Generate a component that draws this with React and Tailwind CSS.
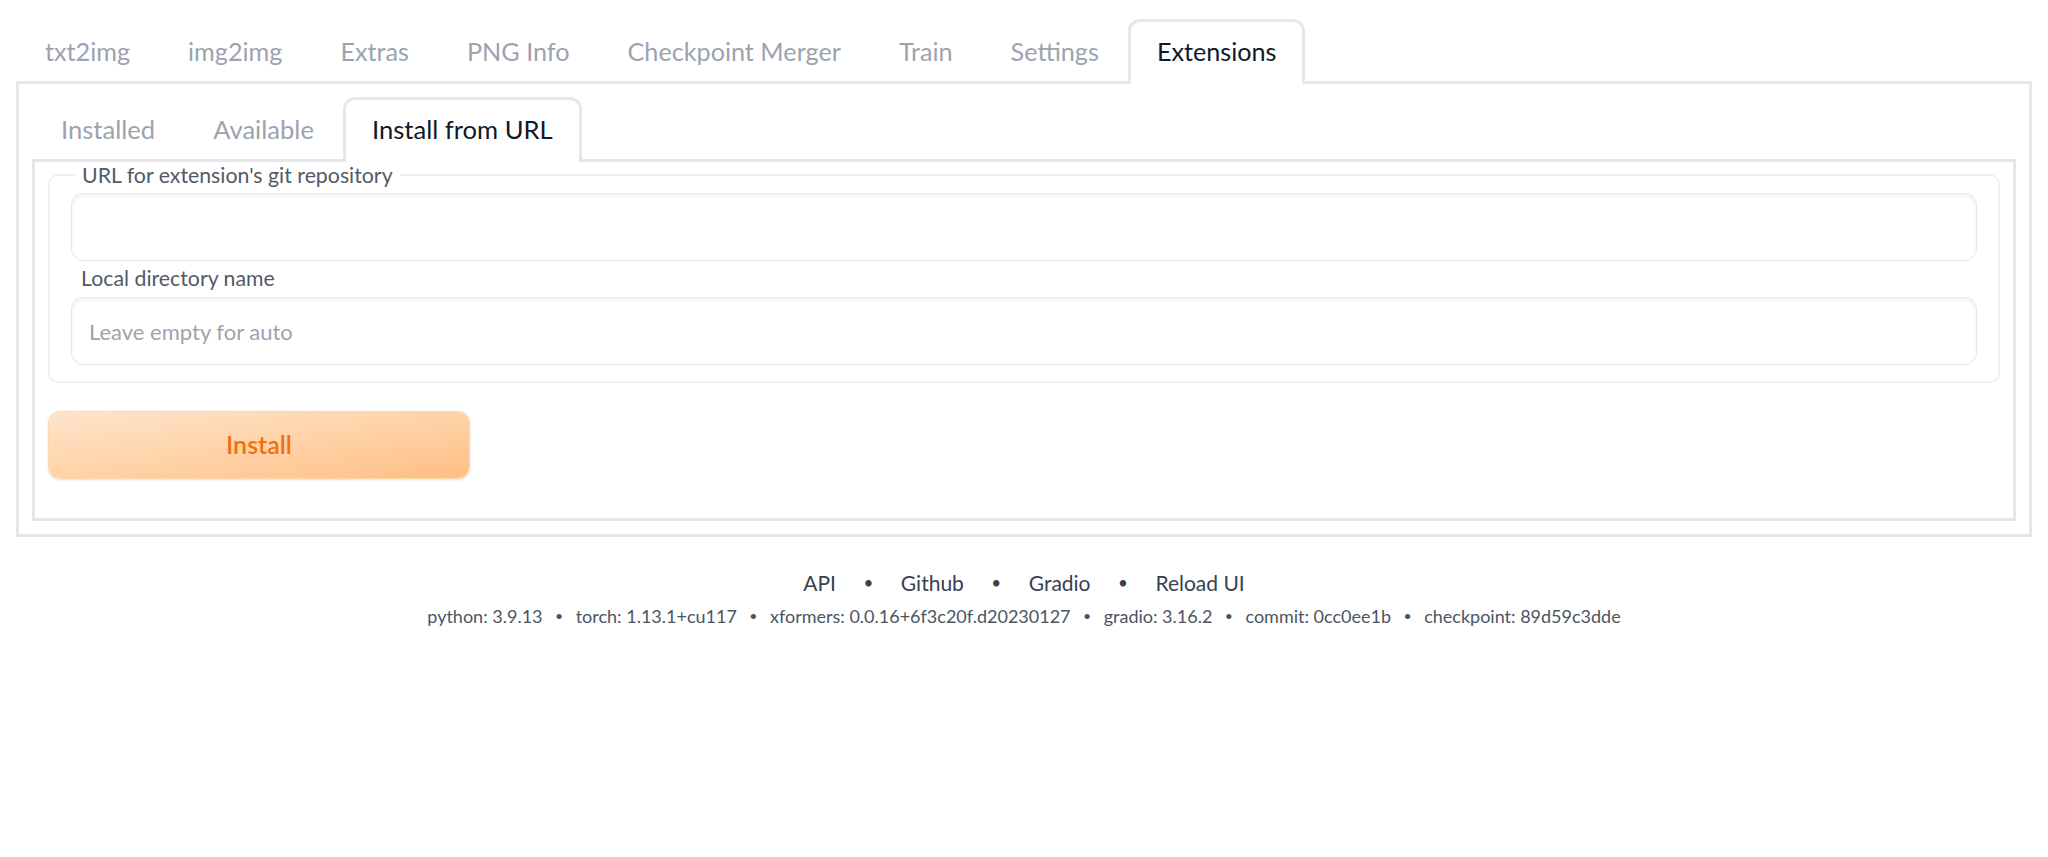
import React from "react";

const topTabs = ["txt2img", "img2img", "Extras", "PNG Info", "Checkpoint Merger", "Train", "Settings", "Extensions"];
const subTabs = ["Installed", "Available", "Install from URL"];

const versions = [
  "python: 3.9.13",
  "torch: 1.13.1+cu117",
  "xformers: 0.0.16+6f3c20f.d20230127",
  "gradio: 3.16.2",
  "commit: 0cc0ee1b",
  "checkpoint: 89d59c3dde",
];

const TabRow = ({ tabs, active, textSize }) => (
  <div className={`flex ${textSize}`}>
    {tabs.map((t) =>
      t === active ? (
        <button
          key={t}
          className="relative z-10 -mb-[3px] h-[65px] px-[26px] pb-[3px] bg-white border-[3px] border-b-0 border-[#e5e7eb] rounded-t-[12px] text-[#111827]"
        >
          {t}
        </button>
      ) : (
        <button key={t} className="h-[62px] px-[29px] pt-[3px] text-[#9ca3af]">
          {t}
        </button>
      )
    )}
  </div>
);

const App = () => {
  return (
    <div className="min-h-screen bg-white pt-[19px] font-['Lato',sans-serif]">

      {/* Main tabs */}
      <div className="px-[16px]">
        <TabRow tabs={topTabs} active="Extensions" textSize="text-[25.2px]" />

        <div className="border-[3px] border-[#e5e7eb] p-[13px]">
          <TabRow tabs={subTabs} active="Install from URL" textSize="text-[25.6px]" />

          {/* Install from URL panel */}
          <div className="border-[3px] border-[#e5e7eb] px-[13px] pt-0 pb-[39px]">
            <fieldset className="border-2 border-[#eef0f3] rounded-[10px] px-[21px] pb-[16px]">
              <legend className="ml-[4px] px-[7px] text-[21.3px] leading-[26px] text-[#525a66]">
                URL for extension's git repository
              </legend>
              <input
                type="text"
                className="mt-[5px] block w-full h-[68px] px-[16px] rounded-[12px] border border-[#e5e7eb] bg-white shadow-[inset_0_2px_4px_rgba(0,0,0,0.05)] text-[22px] outline-none"
              />
              <div className="mt-[4px] ml-[10px] text-[21.3px] leading-[26px] text-[#525a66]">
                Local directory name
              </div>
              <input
                type="text"
                placeholder="Leave empty for auto"
                className="mt-[6px] block w-full h-[68px] px-[17px] rounded-[12px] border border-[#e5e7eb] bg-white shadow-[inset_0_2px_4px_rgba(0,0,0,0.05)] text-[22px] text-[#374151] placeholder:text-[#9ca3af] outline-none"
              />
            </fieldset>

            <button className="mt-[28px] w-[422px] h-[68px] rounded-[12px] border border-[#fed7aa] bg-linear-to-br from-[#fee4cc] via-[#ffd3a8] to-[#ffbe84] shadow-sm text-[25px] font-semibold text-[#f07010]">
              Install
            </button>
          </div>
        </div>
      </div>

      {/* Footer */}
      <div className="mt-[33px] flex flex-col items-center">
        <div className="flex items-center gap-[27.5px] text-[21px] leading-[26px] text-[#374151]">
          <span>API</span>
          <span className="text-[17px]">•</span>
          <span>Github</span>
          <span className="text-[17px]">•</span>
          <span>Gradio</span>
          <span className="text-[17px]">•</span>
          <span>Reload UI</span>
        </div>
        <div className="mt-[8px] flex items-center gap-[12.5px] text-[18px] leading-[24px] text-[#4b5563]">
          {versions.map((v, i) => (
            <React.Fragment key={v}>
              {i > 0 && <span className="text-[14px]">•</span>}
              <span>{v}</span>
            </React.Fragment>
          ))}
        </div>
      </div>

    </div>
  );
};

export default App;
